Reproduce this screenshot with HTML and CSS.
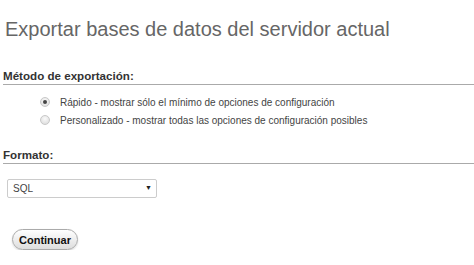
FILE: index.html
```html
<!DOCTYPE html>
<html lang="es">

<head>
    <meta charset="UTF-8">
    <title>Exportar</title>
    <link rel="stylesheet" href="styles.css">
</head>

<body>
    <h2 class="page-title">Exportar bases de datos del servidor actual</h2>

    <div class="export-block">
        <h3 class="block-title">Método de exportación:</h3>
        <ul class="options">
            <li>
                <input type="radio" name="method" id="quick" checked>
                <label for="quick">Rápido - mostrar sólo el mínimo de opciones de configuración</label>
            </li>
            <li>
                <input type="radio" name="method" id="custom">
                <label for="custom">Personalizado - mostrar todas las opciones de configuración posibles</label>
            </li>
        </ul>
    </div>

    <div class="export-block format-block">
        <h3 class="block-title">Formato:</h3>
        <div class="select-wrap">
            <select class="format-select">
                <option>SQL</option>
            </select>
        </div>
    </div>

    <div class="actions">
        <button class="btn">Continuar</button>
    </div>
</body>

</html>
```

FILE: styles.css
```css
body {
    font-family: "Liberation Sans", Arial, sans-serif;
    margin: 0;
    padding: 0 0 0 3px;
    background: #fff;
    color: #444;
    font-size: 10px;
}

.page-title {
    margin: 0;
    padding: 18px 0 0 2px;
    font-size: 20px;
    font-weight: normal;
    color: #666;
    height: 39px;
}

.export-block {
    margin-top: 12px;
}

.block-title {
    margin: 0;
    font-size: 11.6px;
    font-weight: bold;
    color: #333;
    border-bottom: 1px solid #aaa;
    padding-bottom: 2px;
}

.options {
    list-style: none;
    margin: 0;
    padding: 8px 0 0 37px;
}

.options li {
    display: flex;
    align-items: center;
    height: 18px;
}

.options input {
    appearance: none;
    -webkit-appearance: none;
    margin: 0 10px 0 0;
    width: 10px;
    height: 10px;
    border-radius: 50%;
    border: 1px solid #c8c8c8;
    background: radial-gradient(circle at 50% 35%, #fafafa, #d8d8d8);
    position: relative;
}

.options input:checked::after {
    content: "";
    position: absolute;
    left: 2px;
    top: 2px;
    width: 4px;
    height: 4px;
    border-radius: 50%;
    background: #444;
}

.format-block {
    margin-top: 19px;
}

.select-wrap {
    position: relative;
    margin: 15px 0 0 4px;
    width: 150px;
}

.select-wrap::after {
    content: "▼";
    position: absolute;
    right: 5px;
    top: 5px;
    font-size: 7px;
    color: #222;
    pointer-events: none;
}

.format-select {
    appearance: none;
    -webkit-appearance: none;
    width: 150px;
    height: 19px;
    font-family: inherit;
    font-size: 10px;
    color: #444;
    background: #fff;
    border: 1px solid #ccc;
    border-radius: 2px;
    padding: 0 5px;
}

.actions {
    margin-top: 31px;
    padding-left: 9px;
}

.btn {
    font-family: inherit;
    font-size: 11px;
    font-weight: bold;
    color: #111;
    padding: 2px 6px;
    height: 21px;
    border: 1px solid #aaa;
    border-radius: 11px;
    background: linear-gradient(#fff, #ddd);
    box-shadow: 0 1px 2px rgba(0, 0, 0, 0.15);
}
```
